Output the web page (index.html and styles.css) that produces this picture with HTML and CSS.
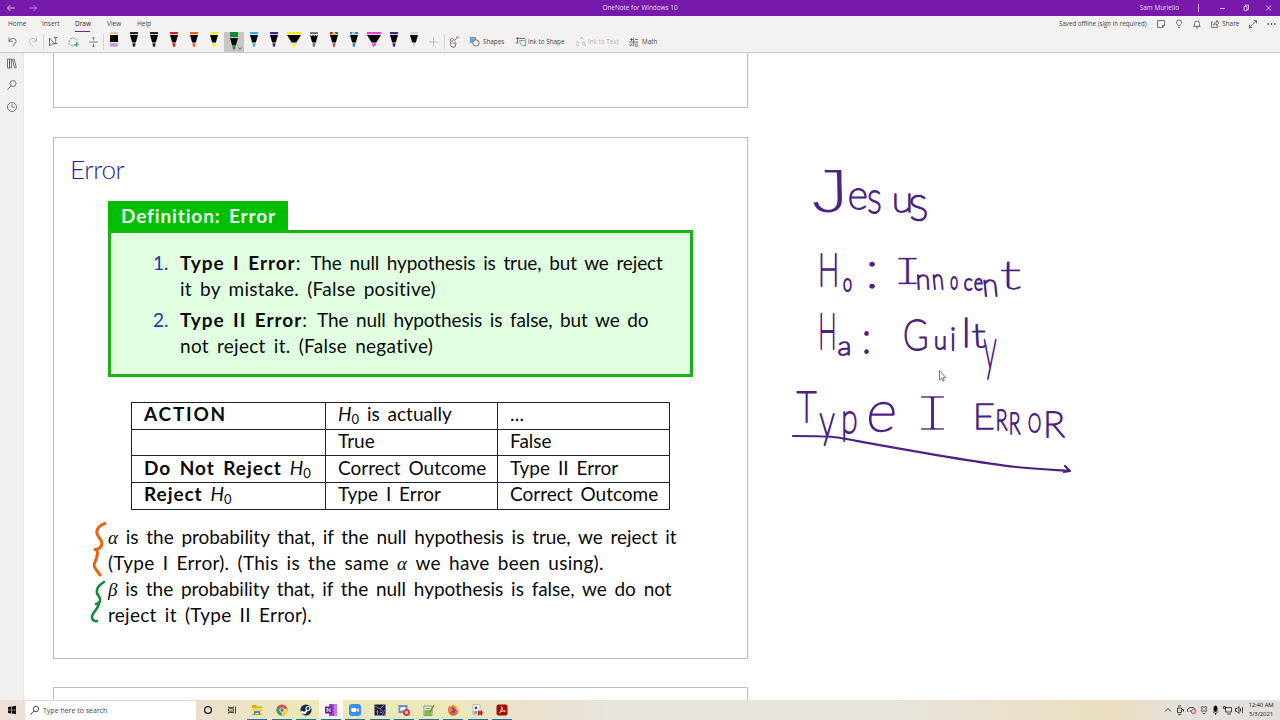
FILE: index.html
```html
<!DOCTYPE html>
<html lang="en">
<head>
    <meta charset="UTF-8">
    <title>OneNote for Windows 10</title>
    <link rel="stylesheet" href="styles.css">
</head>
<body>

<!-- shared symbols -->
<svg class="defs">
    <symbol id="pen" viewBox="0 0 20 20">
        <rect x="6" y="0" width="8" height="2.2" fill="currentColor"/>
        <path d="M6 3h8l-2.2 7.5H8.2z" fill="#000"/>
        <path d="M8.4 11.2h3.2L11 14.8H9z" fill="currentColor"/>
    </symbol>
    <symbol id="marker" viewBox="0 0 20 20">
        <rect x="3" y="0" width="14" height="2.2" fill="currentColor"/>
        <path d="M3 3h14l-4.6 7.5H7.6z" fill="#000"/>
        <path d="M8 11.2h4.2l-.6 2.2-2.8 1.6z" fill="currentColor"/>
    </symbol>
</svg>

<div class="titlebar">
    <div class="nav">
        <svg width="10" height="8" viewBox="0 0 10 8"><path d="M9 4H1.5M4.5 1l-3 3 3 3"/></svg>
        <svg class="dim" width="10" height="8" viewBox="0 0 10 8"><path d="M1 4h7.5M5.5 1l3 3-3 3"/></svg>
    </div>
    <span class="app">OneNote for Windows 10</span>
    <div class="win">
        <span class="user">Sam Muriello</span>
        <svg width="90" height="16" viewBox="0 0 90 16"><path d="M8.500 4v8M30 8.500h5M54 6.500h3v4h-3zM55.500 6.500V5h3v4.500H57M76 5.500l5 5M81 5.500l-5 5"/></svg>
    </div>
</div>

<div class="ribbon">
    <div class="tabs">
        <span>Home</span><span>Insert</span><span class="current">Draw</span><span>View</span><span>Help</span>
        <div class="status">
            <span class="saved">Saved offline (sign in required)</span>
            <svg width="58" height="14" viewBox="0 0 58 14"><path d="M6.500 3.500h7v5l-2 2h-5zM13.500 8.500h-2v2M27 8.500c0-1.200-1.500-1.500-1.500-3a2.500 2.500 0 0 1 5 0c0 1.500-1.500 1.800-1.500 3zM27 10.500h2M42.500 9.500h7M43.500 9.500V6.500a2.500 2.500 0 0 1 5 0v3M45 11h2"/></svg>
            <svg width="12" height="14" viewBox="0 0 12 14"><path d="M4 5H2.500v5.500h6V8.500M4.500 8.500c0-2 1-3 3-3V3.500l2.500 2.500-2.500 2.500V7c-1.500 0-2.300.5-3 1.500z"/></svg>
            <span class="share">Share</span>
            <svg width="34" height="14" viewBox="0 0 34 14"><path d="M3.500 10.500l7-7M7.500 3.500h3v3M3.500 7.500v3h3"/><path class="dots" d="M21.500 7h1.400M24.800 7h1.400M28.100 7h1.400"/></svg>
        </div>
    </div>
    <div class="tools">
        <svg class="edit" width="104" height="20" viewBox="0 0 104 20">
            <path d="M9 5.500v3.800h3.800M9.200 9c1.500-3.600 7-3.500 6.800.3 0 1.800-2 3.200-3.500 5"/>
            <path class="off" d="M36.500 5.500v3.800h-3.800M36.300 9c-1.500-3.600-7-3.500-6.800.3 0 1.800 2 3.200 3.500 5"/>
            <path class="bar" d="M43.500 2v16M103.500 2v16"/>
            <path d="M49.500 6v8l2-2h3.200zM54 5.500h3.500M55.700 5.500v6M54 11.500h3.500"/>
            <circle cx="73" cy="10" r="4" stroke="#666" stroke-dasharray="2 1"/>
            <path d="M74 12.500h5M76.500 10v5" stroke="#2a9d5c"/>
            <path d="M89 10h9" stroke="#666"/>
            <path d="M93.500 5v3.500M92 6.500L93.500 5 95 6.500M93.500 15v-3.500M92 13.500l1.500 1.500 1.500-1.500" stroke="#2b7cc4"/>
        </svg>
        <div class="pens">
            <svg viewBox="0 0 20 20"><rect x="6" y="0" width="8" height="2" fill="#e5c98f"/><rect x="6" y="3" width="8" height="7" fill="#000"/><path d="M6 11h8v2.500l-1 1.300H7l-1-1.300z" fill="#c89bd8"/></svg>
            <svg class="c-black"><use href="#pen"/></svg>
            <svg class="c-black"><use href="#pen"/></svg>
            <svg class="c-red"><use href="#pen"/></svg>
            <svg class="c-orange"><use href="#pen"/></svg>
            <svg class="c-yellow"><use href="#pen"/></svg>
            <div class="picked">
                <svg class="c-green" viewBox="0 0 20 20"><rect x="6" y="0" width="8" height="5" fill="currentColor"/><path d="M6 6h8l-2.200 7.500H8.200z" fill="#000"/><path d="M8.400 14.200h3.200l-.8 3.300H9.200z" fill="currentColor"/><path d="M14.500 15.500l1.700 1.700 1.700-1.700" fill="none" stroke="#444"/></svg>
            </div>
            <svg class="c-sky"><use href="#pen"/></svg>
            <svg class="c-purple"><use href="#pen"/></svg>
            <svg class="c-yellow"><use href="#marker"/></svg>
            <svg class="c-gray" viewBox="0 0 20 20"><use href="#pen"/><path d="M6 2.500l1.500 2L9 3l1.200 1.500L11.500 3l1.300 1.500L14 2.500z" fill="#ccc"/></svg>
            <svg class="c-brown" viewBox="0 0 20 20"><use href="#pen"/><path d="M6 0h3v2.200H6z" fill="#b3261e"/><path d="M8.500 0h3v2.200h-3z" fill="#e2c23a"/><path d="M11.500 0H14v2.200h-2.500z" fill="#2c7d46"/></svg>
            <svg class="c-teal" viewBox="0 0 20 20"><use href="#pen"/><path d="M8 0h3v2.200H8z" fill="#9ccbe8"/></svg>
            <svg class="c-pink"><use href="#marker"/></svg>
            <svg class="c-purple"><use href="#pen"/></svg>
            <svg class="c-white"><use href="#pen"/></svg>
        </div>
        <svg class="edit" width="59" height="20" viewBox="0 0 59 20">
            <path class="off" d="M5 10h9M9.500 5.500v9"/>
            <path class="bar" d="M20.500 2v16"/>
            <path d="M26.500 9.500v4l1.500 1.500h3l1-4h-3.500M28 10c0-3 3-3 3-.5M26.500 9c0-2.500 1.500-3 3-2"/>
            <path d="M31 8l3-3M32 5h2.500" stroke="#d13438"/>
            <rect x="46.500" y="5.500" width="5" height="5" fill="#6aaee0" stroke="#4a90c8"/>
            <circle cx="52" cy="11" r="3.200" fill="#f4f2f1"/>
        </svg>
        <span class="label l-shapes">Shapes</span>
        <svg class="edit" width="14" height="20" viewBox="0 0 14 20">
            <path d="M2 6.500h9M3.500 5v6M1.500 11h3"/>
            <path d="M5.500 8.500h6v5h-3l-2-1.500zM11 8l1.500-1" stroke="#3a96d0"/>
        </svg>
        <span class="label l-shape">Ink to Shape</span>
        <svg class="edit" width="14" height="20" viewBox="0 0 14 20">
            <path class="off" d="M6 7.500l1.500-2.500L9 7.500M2 11.500l1.500-2 1.500 2M2 13h3M8 12.500l2-3 1.500 4.500M8.500 13h3"/>
        </svg>
        <span class="label l-text">Ink to Text</span>
        <svg class="edit" width="14" height="20" viewBox="0 0 14 20">
            <path d="M1 10h9.500M5.700 5.500v9M2 7.500h3M3.500 6v3M7 7.500h3M2 11.500l2.500 2.500M4.500 11.500L2 14M7 12h3M7 14h3"/>
        </svg>
        <span class="label">Math</span>
    </div>
</div>

<div class="workspace">
    <div class="sidebar">
        <svg width="24" height="22" viewBox="0 0 24 22"><path d="M7.500 7v9h2V7zM9.500 7v9h2V7zM12.500 7.300l2 8.700 1.800-.5-2.200-8.600z"/></svg>
        <svg width="24" height="22" viewBox="0 0 24 22"><circle cx="13" cy="9.500" r="3"/><path d="M11 12l-3.500 3.500"/></svg>
        <svg width="24" height="22" viewBox="0 0 24 22"><circle cx="12" cy="11" r="4.500"/><path d="M12 8v3.200h2.500"/></svg>
    </div>
    <div class="canvas">
        <div class="page page-prev"></div>
        <div class="page slide">
            <h1>Error</h1>
            <div class="block-title">Definition: Error</div>
            <ol class="block">
                <li>
                    <p class="tight"><b>Type I Error</b><span class="colon">:</span> The null hypothesis is true, but we reject</p>
                    <p class="loose">it by mistake. (False positive)</p>
                </li>
                <li>
                    <p class="tight"><b>Type II Error</b><span class="colon">:</span> The null hypothesis is false, but we do</p>
                    <p class="loose">not reject it. (False negative)</p>
                </li>
            </ol>
            <table>
                <tr><td><b class="action">ACTION</b></td><td><i>H</i><sub>0</sub> is actually</td><td class="loose">...</td></tr>
                <tr><td></td><td>True</td><td>False</td></tr>
                <tr><td><b>Do Not Reject</b> <i>H</i><sub>0</sub></td><td>Correct Outcome</td><td>Type II Error</td></tr>
                <tr><td><b>Reject</b> <i>H</i><sub>0</sub></td><td>Type I Error</td><td>Correct Outcome</td></tr>
            </table>
            <div class="notes">
                <p class="snug"><i class="greek">α</i> is the probability that, if the null hypothesis is true, we reject it</p>
                <p class="loose">(Type I Error). (This is the same <i class="greek">α</i> we have been using).</p>
                <p class="snug"><i class="greek">β</i> is the probability that, if the null hypothesis is false, we do not</p>
                <p class="loose">reject it (Type II Error).</p>
            </div>
        </div>
        <div class="page page-next"></div>

        <!-- pen strokes lie over the whole canvas -->
        <svg class="ink" id="ink" viewBox="24 52 1256 648">
            <path class="orange" d="M105 523.500c-5 1-9 6-8 10 1 4 5 6 5 10 0 4-4 6-7 6M97 550c1 4 0 8-2 12-3 5 2 8 5 13"/>
            <path class="green" d="M104 582c-5 3-8 7-7 11 1 3 4 4 3 8-1 3-3 3-4 3M99 603c0 5-7 10-7 14 0 3 3 5 5 4"/>
            <path d="M793 436c15 0 35 0 45 1.500 50 9 130 24 178 29.500 20 2 40 3 54 4l-5-5M1070 471l-6 1"/>
            <path class="pointer" d="M939.500 371v9l2-1.800 1.400 3 1.300-.6-1.300-2.900h2.600z"/>
        </svg>
    </div>
</div>

<div class="taskbar">
    <svg class="start" width="24" height="20" viewBox="0 0 24 20"><path d="M8 7l3.500-.5v3.200H8zM12 6.400l4-.6v3.900h-4zM8 10.300h3.500v3.200L8 13zM12 10.300h4v3.900l-4-.6z"/></svg>
    <div class="search">
        <svg width="18" height="19" viewBox="0 0 18 19"><circle cx="11" cy="8" r="2.700"/><path d="M9 10l-3.500 3.500"/></svg>
        <span>Type here to search</span>
    </div>
    <svg class="cortana" width="49" height="20" viewBox="0 0 49 20"><circle cx="12" cy="10" r="3.400" stroke-width="1.400"/><path d="M32.500 6.500v1h5v-1M32.500 13.500v-1h5v1M32.500 8.800h5v2.400h-5zM39.500 6.500v7"/></svg>
    <div class="apps">
        <div class="app-icon"><svg viewBox="0 0 12 12"><path d="M1 1h4l1 1.500h5V11H1z" fill="#e8a91c"/><path d="M1 4h10v6H1z" fill="#fbd65a"/><path d="M3 7h6v4H7.500V9h-3v2H3z" fill="#3b92d8"/></svg></div>
        <div class="app-icon"><svg viewBox="0 0 12 12"><circle cx="6" cy="6" r="5.500" fill="#dd4b3e"/><path d="M6 6L1.200 3.300A5.500 5.500 0 0 0 6 11.500z" fill="#34a350"/><path d="M6 6l5.200-1.800A5.500 5.500 0 0 1 5.500 11.500z" fill="#f8cf3a"/><circle cx="6" cy="6" r="2.500" fill="#fff"/><circle cx="6" cy="6" r="1.900" fill="#4285e8"/></svg></div>
        <div class="app-icon"><svg viewBox="0 0 12 12"><circle cx="6" cy="6" r="5.600" fill="#17284f"/><circle cx="8" cy="4.500" r="2" fill="#17284f" stroke="#fff" stroke-width="1.200"/><path d="M.8 6.500l3.500 1.300 2.500-2 1 1-2.500 3.200-2 .2-2.500-1.500z" fill="#fff"/></svg></div>
        <div class="app-icon active"><svg viewBox="0 0 12 12"><path d="M4 0h8v12H4z" fill="#a543cf"/><path d="M9 0h3v12H9z" fill="#c77be8"/><path d="M0 2.500h7v7H0z" fill="#6b1d9e"/><path d="M2.200 8V4L5 8V4" fill="none" stroke="#fff" stroke-width=".9"/></svg></div>
        <div class="app-icon"><svg viewBox="0 0 12 12"><rect width="12" height="12" rx="3" fill="#3e8eea"/><rect x="2.300" y="4" width="5" height="4" rx="1" fill="#fff"/><path d="M7.800 5.500L9.700 4v4L7.800 6.700z" fill="#fff"/></svg></div>
        <div class="app-icon"><svg viewBox="0 0 12 12"><path d="M.5.500h11v11H.5z" fill="#1d1a45"/><path d="M1 2l5 3 4-4M2 8h3M3.500 6v5M6 6h2M6 8.500h2" stroke="#a88a8c" stroke-width=".8" fill="none"/><path d="M8 6l3 5M11 6L8 11" stroke="#6a7ad0" stroke-width=".8"/></svg></div>
        <div class="app-icon"><svg viewBox="0 0 12 12"><path d="M.5 1h9v8h-9z" fill="#7388c8"/><path d="M2 6.500c0-3 1-4 3-3.500 2-.5 3 .5 3 3.500z" fill="#fff"/><circle cx="8.500" cy="8.500" r="3.500" fill="#d83b42"/><circle cx="8.500" cy="8.500" r="1.400" fill="#f4d4d4"/></svg></div>
        <div class="app-icon"><svg viewBox="0 0 12 12"><path d="M1 2h8v9.500H1z" fill="#f4f7ed" stroke="#777" stroke-width=".8"/><path d="M1.500 6h7v5h-7z" fill="#79c635"/><path d="M3 4.500h4" stroke="#666"/><path d="M11 1L7 8" stroke="#8a6424" stroke-width="1.200"/></svg></div>
        <div class="app-icon"><svg viewBox="0 0 12 12"><path d="M2 2l1.500 1L6 1l3 1.500L11 5c1 4-1.500 6.700-5 6.700S-.5 8 2 2z" fill="#f4682b"/><path d="M6 .5c3 1 5.500 3 5 7L9 5z" fill="#fcc836"/><circle cx="6" cy="6.500" r="2.600" fill="#7848b8"/><path d="M2 5c2-1 3 0 4 .5L4.500 7.500 2 8z" fill="#fa8b2c"/></svg></div>
        <div class="app-icon"><svg viewBox="0 0 12 12"><path d="M1 .5h7V11H1z" fill="#f8f8f8" stroke="#aaa" stroke-width=".7"/><circle cx="4" cy="4" r="1.400" fill="#456"/><path d="M1.500 7h4v3h-4z" fill="#83a6ba"/><path d="M6 6l2 1.500L10 6l.3 2 1.700 1-2 .6V12L8 10.500 6 11.500z" fill="#d2222a"/></svg></div>
        <div class="app-icon"><svg viewBox="0 0 12 12"><rect x=".5" y=".5" width="11" height="11" rx="2" fill="#a50d08"/><path d="M3 9c2-1 3.500-5 2.700-6.300C5 3.500 7 7.300 9.300 7.300 8 6.300 4 7.500 3 9z" fill="none" stroke="#fff" stroke-width=".8"/></svg></div>
    </div>
    <div class="tray">
        <svg width="85" height="20" viewBox="0 0 85 20">
            <path d="M5 11.500L8 8.500l3 3"/>
            <path d="M17.500 8h4v4.500h-4zM18 6h3M18 14.500h3M22 9.500h1.500v2"/>
            <path d="M28 12c-1.500-3 1-5 4-4.500 2 0 3 1 3 2.500M29.500 11h3"/>
            <circle cx="33.500" cy="11.500" r="2.200" stroke="#d8262c" fill="#f0d0d0"/>
            <path d="M41 7.500l1.500-1L44 7.500 45.500 6.500 47 7.500 45.500 9 47 10.500l-1.500 1L44 10.500l-1.500 1-1.500-1L42.500 9zM42.500 13l1.500 1 1.500-1"/>
            <rect x="54" y="6" width="3" height="5.500" rx="1.500" fill="#000" stroke="#000"/><path d="M53 11.500c1 2.500 4 2.500 5 0M55.500 13v2"/>
            <path d="M65.500 7.500h6v4.500h-6zM67 14h4M63.500 6.500h2v2h-2z"/>
            <path d="M75.500 8.500v3h1.500l2 2v-7l-2 2zM80.500 8.500v3M82.500 7v6"/>
        </svg>
        <div class="clock"><span>12:40 AM</span><span>5/3/2021</span></div>
    </div>
</div>

<script src="ink.js"></script>
</body>
</html>
```
FILE: styles.css
```css
* {
    padding: 0;
    margin: 0;
    box-sizing: border-box;
}
body {
    width: 1280px;
    height: 720px;
    overflow: hidden;
    display: flex;
    flex-direction: column;
    background: #fff;
    font: 7px/1 "Open Sans", "Noto Sans", sans-serif;
    color: #444;
}
svg {
    display: block;
    flex: none;
    fill: none;
    stroke: #555;
    stroke-width: 0.8;
}
.defs {
    position: absolute;
    width: 0;
    height: 0;
}

/* title bar */
.titlebar {
    height: 16px;
    flex: none;
    display: grid;
    grid-template-columns: 1fr auto 1fr;
    align-items: center;
    background: #7719aa;
    color: #eadcf2;
    font-size: 6.4px;
}
.app {
    padding-top: 1px;
}
.titlebar svg {
    stroke: #eadcf2;
}
.titlebar .dim {
    stroke: #c79be0;
}
.nav {
    display: flex;
    gap: 12px;
    padding-left: 6px;
}
.win {
    display: flex;
    align-items: center;
    justify-content: flex-end;
}
.user {
    padding: 1px 11px 0 0;
}

/* ribbon */
.ribbon {
    height: 36px;
    flex: none;
    background: #f4f2f1;
    box-shadow: 0 1px 1px #cfcdcc;
    z-index: 1;
}
.tabs {
    height: 16px;
    display: flex;
    align-items: center;
    padding-left: 8px;
    font-size: 6.5px;
}
.tabs > span {
    width: 33px;
    padding-top: 1px;
}
.tabs > span:nth-child(1) {
    width: 34px;
}
.tabs > span:nth-child(4) {
    width: 30px;
}
.tabs .current {
    color: #222;
    width: 32px;
    padding-top: 0;
    background: linear-gradient(#7719aa, #7719aa) 0 100% / 15px 1px no-repeat;
    line-height: 14px;
    height: 15px;
}
.status {
    display: flex;
    align-items: center;
    margin-left: auto;
}
.saved {
    width: 92px;
    font-size: 6.2px;
    white-space: nowrap;
}
.share {
    width: 25px;
    padding-left: 1px;
    font-size: 6.5px;
}
.status .dots {
    stroke: #222;
    stroke-width: 1.3;
}
.tools {
    height: 20px;
    display: flex;
    align-items: center;
}
.edit .off {
    stroke: #b5b3b2;
}
.edit .bar {
    stroke: #cfcdcc;
}
.pens {
    display: flex;
}
.pens svg {
    width: 20px;
    height: 20px;
    stroke: none;
}
.picked {
    background: #c8c6c4;
}
.c-black { color: #26262c; }
.c-red { color: #d81e28; }
.c-orange { color: #e8640f; }
.c-yellow { color: #f4ee1c; }
.c-green { color: #118a3c; }
.c-sky { color: #2fb2e0; }
.c-purple { color: #4b2391; }
.c-gray { color: #77797c; }
.c-brown { color: #a05a32; }
.c-teal { color: #3c86a8; }
.c-pink { color: #ec3ce0; }
.c-white { color: #d4d4d4; }
.label {
    font-size: 6.3px;
    white-space: nowrap;
    padding-top: 1px;
}
.l-shapes { width: 31px; }
.l-shape { width: 46px; }
.l-text {
    width: 40px;
    color: #b5b3b2;
}

/* workspace */
.workspace {
    flex: 1;
    min-height: 0;
    display: flex;
}
.sidebar {
    width: 24px;
    flex: none;
    background: #f1f0ef;
    border-right: 1px solid #eae8e7;
}
.canvas {
    flex: 1;
    position: relative;
    overflow: hidden;
    padding-left: 29px;
}
.page {
    width: 695px;
    border: 1px solid #bfbfbf;
}
.page-prev {
    height: 56px;
    border-top: 0;
    margin-bottom: 29px;
}
.page-next {
    height: 40px;
    margin-top: 28px;
}
.slide {
    height: 522px;
    padding: 14px 0 0 54px;
    font: 19px/26px Lato, "Noto Sans", sans-serif;
    color: #0a0a0a;
    word-spacing: 3px;
    white-space: nowrap;
}
.slide b {
    letter-spacing: 0.95px;
}
.slide .action {
    letter-spacing: 1.77px;
}
.loose {
    letter-spacing: 0.28px;
}
.snug {
    letter-spacing: -0.04px;
}
.tight {
    letter-spacing: -0.13px;
}
.colon {
    margin-right: 3px;
}
h1 {
    margin-left: -38px;
    height: 49px;
    font-size: 26px;
    font-weight: 300;
    line-height: 34px;
    letter-spacing: -0.3px;
    color: #2a1f9c;
}
.block-title {
    width: 180px;
    height: 29px;
    padding-left: 13px;
    background: #00be00;
    color: #f2fff2;
    font-weight: bold;
    line-height: 29px;
    letter-spacing: 0.87px;
}
.block {
    width: 585px;
    height: 147px;
    padding: 17px 0 0 69px;
    border: 3px solid #19b219;
    background: #e1ffe1;
    list-style: none;
    counter-reset: item;
}
.block li {
    margin-bottom: 5px;
    counter-increment: item;
}
.block li::before {
    content: counter(item) ".";
    float: left;
    margin-left: -27px;
    color: #2a2fa8;
}
table {
    margin: 25px 0 14px 23px;
    width: 539px;
    table-layout: fixed;
    border-collapse: collapse;
    line-height: 22px;
}
td {
    width: 172px;
    height: 26.7px;
    padding: 0 0 3px 12px;
    border: 1px solid #222;
}
td:first-child {
    width: 194px;
}
sub {
    font-size: 13px;
    line-height: 0;
    vertical-align: -3px;
}
.notes p {
    height: 26px;
}
.greek {
    font-family: "Liberation Serif", serif;
    line-height: 0;
}

/* ink */
.ink {
    position: absolute;
    left: 0;
    top: 0;
    width: 1256px;
    height: 648px;
    stroke: #4b2183;
    stroke-width: 2.2;
    stroke-linecap: round;
    stroke-linejoin: round;
}
.ink text {
    fill: #4b2183;
    stroke-width: 1.8;
    vector-effect: non-scaling-stroke;
    font-family: Lato, sans-serif;
    font-weight: 100;
}
.ink .mono {
    font-family: "Liberation Mono", monospace;
    font-weight: 400;
    stroke: #fff;
    stroke-width: 1.5;
}
.ink .big {
    stroke-width: 2.8;
}
.ink .orange {
    stroke: #e8640f;
    stroke-width: 3;
}
.ink .green {
    stroke: #118a3c;
    stroke-width: 2.6;
}
.ink .pointer {
    fill: #fff;
    stroke: #555;
    stroke-width: 0.8;
}

/* taskbar */
.taskbar {
    height: 20px;
    flex: none;
    display: flex;
    background: linear-gradient(90deg, #efe0d8 0, #ecdfcd 200px, #ebe8bb 290px, #ebe9b9 440px, #ebe2cc 520px, #e8e4de 620px, #e8e4de 880px, #ecdfc0 1110px, #e4e0dc 1180px, #e2dfdd 1280px);
}
.start {
    fill: #111;
    stroke: none;
}
.search {
    width: 172px;
    display: flex;
    align-items: center;
    background: #fff;
    border: 1px solid #ddd;
    border-width: 1px 0 0 1px;
    font-size: 7px;
}
.search svg {
    stroke: #222;
}
.cortana {
    stroke: #222;
}
.apps {
    display: flex;
}
.app-icon {
    width: 24.5px;
    display: flex;
    justify-content: center;
    padding-top: 4px;
    background: linear-gradient(#1c6f9f, #1c6f9f) 50% 100% / 20px 1.5px no-repeat;
}
.app-icon svg {
    width: 12px;
    height: 12px;
    stroke: none;
}
.app-icon.active {
    background-color: #faf8ec;
}
.tray {
    margin-left: auto;
    display: flex;
    align-items: center;
}
.tray svg {
    stroke: #222;
}
.clock {
    width: 35px;
    display: flex;
    flex-direction: column;
    align-items: center;
    gap: 3px;
    padding: 0 3px 1px 0;
    font-size: 6px;
    letter-spacing: -0.1px;
    color: #222;
    white-space: nowrap;
}
```
FILE: ink.js
```js
// each letter: text, left, top, right, bottom, slant, class
var letters = [
    ["J", 811, 169, 844, 214, 0.02, "mono big"], ["e", 850, 189, 866, 209, 0], ["s", 869, 191, 880, 213, 0], ["u", 895, 194, 910, 212, 0], ["s", 911, 195, 926, 220, 0.05],
    ["H", 821, 254, 836, 286, 0], ["o", 844, 279, 851, 291, 0], [":", 870, 264, 874, 289, 0],
    ["I", 897, 257, 918, 285, 0, "mono"], ["n", 918, 275, 928, 289, 0.05], ["n", 934, 275, 942, 289, 0.1], ["o", 951, 277, 957, 289, 0],
    ["c", 965, 279, 972, 290, 0], ["e", 975, 279, 982, 290, 0], ["n", 985, 280, 996, 296, 0.1], ["t", 1002, 262, 1020, 289, 0],
    ["H", 821, 314, 834, 349, 0], ["a", 839, 342, 849, 355, 0], [":", 865, 331, 868, 353, 0],
    ["G", 905, 320, 926, 350, 0], ["u", 936, 337, 945, 349, 0], ["i", 952, 328, 954, 350, 0], ["l", 965.5, 318, 966.5, 347, 0], ["t", 973, 324, 985, 347, 0.05], ["y", 984, 340, 996, 379, 0],
    ["T", 797, 393, 816, 422, 0], ["y", 820, 414, 834, 445, 0], ["p", 844, 412, 856, 441, 0], ["e", 870, 403, 894, 432, -0.1],
    ["I", 919, 396, 946, 431, 0, "mono big"],
    ["E", 977, 404, 993, 429, 0], ["R", 998, 410, 1007, 430, 0], ["R", 1011, 413, 1020, 434, 0], ["O", 1029, 413, 1040, 432, 0], ["R", 1047, 412, 1064, 437, 0]
];

var ink = document.getElementById("ink");
var ctx = document.createElement("canvas").getContext("2d");
for (var i = 0; i < letters.length; i++) {
    var l = letters[i];
    ctx.font = l[6] ? "100px 'Liberation Mono'" : "100 100px Lato";
    var m = ctx.measureText(l[0]);
    // stretch the letter to fill its box
    var sx = (l[3] - l[1]) / (m.actualBoundingBoxRight + m.actualBoundingBoxLeft);
    var sy = (l[4] - l[2]) / (m.actualBoundingBoxAscent + m.actualBoundingBoxDescent);
    var x = l[1] + m.actualBoundingBoxLeft * sx + l[5] * (l[4] - l[2]) / 2;
    var y = l[2] + m.actualBoundingBoxAscent * sy;
    var t = document.createElementNS("http://www.w3.org/2000/svg", "text");
    t.textContent = l[0];
    t.setAttribute("font-size", 100);
    t.setAttribute("class", l[6] || "");
    t.setAttribute("transform", "matrix(" + [sx, 0, l[5] * sy, sy, x, y].join(" ") + ")");
    ink.appendChild(t);
}
```
